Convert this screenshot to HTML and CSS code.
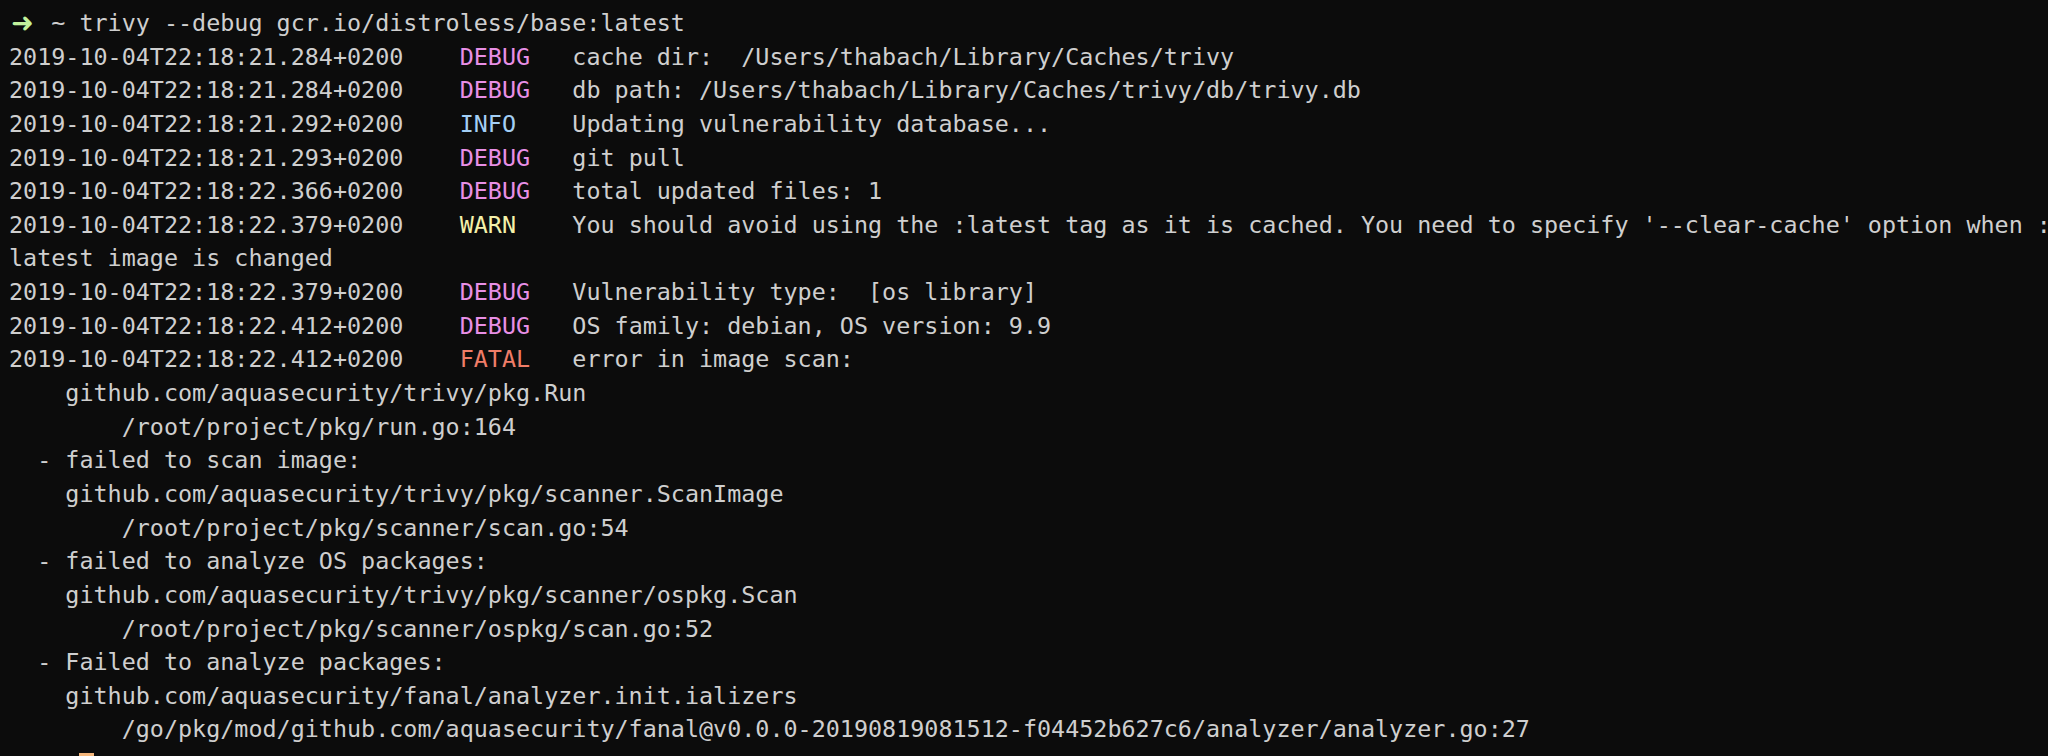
FILE: index.html
```html
<!DOCTYPE html>
<html lang="en">
<head>
<meta charset="utf-8">
<title>trivy debug</title>
<link rel="stylesheet" href="styles.css">
</head>
<body>
<div class="term"><div class="line"><span class="arrow">➜</span> ~ trivy --debug gcr.io/distroless/base:latest</div><div class="line">2019-10-04T22:18:21.284+0200	<span class="debug">DEBUG</span>	cache dir:  /Users/thabach/Library/Caches/trivy</div><div class="line">2019-10-04T22:18:21.284+0200	<span class="debug">DEBUG</span>	db path: /Users/thabach/Library/Caches/trivy/db/trivy.db</div><div class="line">2019-10-04T22:18:21.292+0200	<span class="info">INFO</span>	Updating vulnerability database...</div><div class="line">2019-10-04T22:18:21.293+0200	<span class="debug">DEBUG</span>	git pull</div><div class="line">2019-10-04T22:18:22.366+0200	<span class="debug">DEBUG</span>	total updated files: 1</div><div class="line">2019-10-04T22:18:22.379+0200	<span class="warn">WARN</span>	You should avoid using the :latest tag as it is cached. You need to specify '--clear-cache' option when :</div><div class="line">latest image is changed</div><div class="line">2019-10-04T22:18:22.379+0200	<span class="debug">DEBUG</span>	Vulnerability type:  [os library]</div><div class="line">2019-10-04T22:18:22.412+0200	<span class="debug">DEBUG</span>	OS family: debian, OS version: 9.9</div><div class="line">2019-10-04T22:18:22.412+0200	<span class="fatal">FATAL</span>	error in image scan:</div><div class="line">    github.com/aquasecurity/trivy/pkg.Run</div><div class="line">        /root/project/pkg/run.go:164</div><div class="line">  - failed to scan image:</div><div class="line">    github.com/aquasecurity/trivy/pkg/scanner.ScanImage</div><div class="line">        /root/project/pkg/scanner/scan.go:54</div><div class="line">  - failed to analyze OS packages:</div><div class="line">    github.com/aquasecurity/trivy/pkg/scanner/ospkg.Scan</div><div class="line">        /root/project/pkg/scanner/ospkg/scan.go:52</div><div class="line">  - Failed to analyze packages:</div><div class="line">    github.com/aquasecurity/fanal/analyzer.init.ializers</div><div class="line">        /go/pkg/mod/github.com/aquasecurity/fanal@v0.0.0-20190819081512-f04452b627c6/analyzer/analyzer.go:27</div><div class="line">     <span class="cursor"> </span></div></div>
</body>
</html>
```

FILE: styles.css
```css
html, body {
  margin: 0;
  padding: 0;
  background: #0c0c0c;
  height: 100%;
  overflow: hidden;
}

.term {
  padding: 7px 0 0 9px;
  font-family: "DejaVu Sans Mono", "Liberation Mono", monospace;
  font-size: 23.4px;
  line-height: 33.65px;
  color: #cfcfcf;
  white-space: pre;
  tab-size: 8;
  -moz-tab-size: 8;
}

.line {
  height: 33.65px;
}

.arrow {
  display: inline-block;
  box-sizing: border-box;
  width: 28.17px;
  padding-left: 2px;
  color: #c2f29c;
  font-family: "DejaVu Sans", sans-serif;
  font-weight: bold;
  font-size: 27px;
  line-height: 20px;
  vertical-align: -1px;
}

.debug { color: #e88fe6; }
.info  { color: #a3cff5; }
.warn  { color: #f5f1aa; }
.fatal { color: #f07d68; }

.cursor {
  display: inline-block;
  width: 14.09px;
  height: 27px;
  vertical-align: -6px;
  background: #f5b77c;
}
```
